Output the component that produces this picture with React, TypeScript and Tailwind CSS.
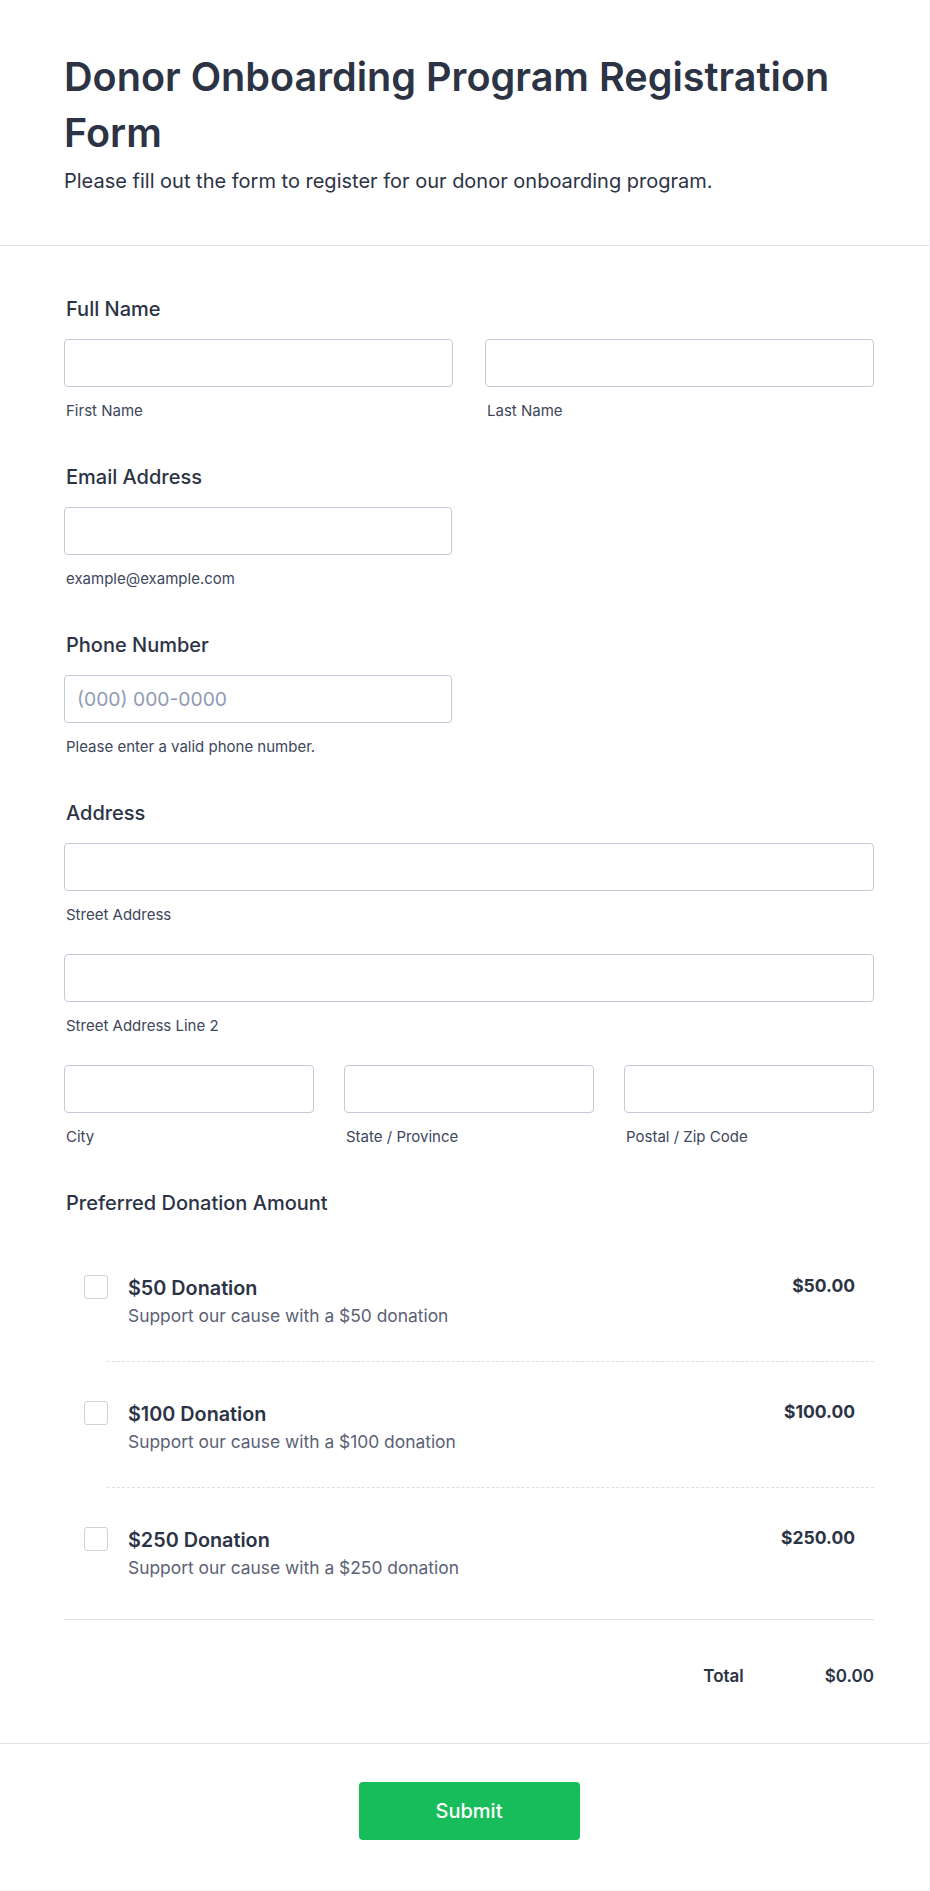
import React from 'react';

const products = [
  { name: '$50 Donation', desc: 'Support our cause with a $50 donation', price: '$50.00' },
  { name: '$100 Donation', desc: 'Support our cause with a $100 donation', price: '$100.00' },
  { name: '$250 Donation', desc: 'Support our cause with a $250 donation', price: '$250.00' },
];

const Label = ({ children }: { children: React.ReactNode }) => (
  <div className="pl-[2px] text-[20px] leading-[28px] font-medium text-[#2c3345]">{children}</div>
);

const SubLabel = ({ children }: { children: React.ReactNode }) => (
  <div className="mt-[14px] pl-[2px] text-[15px] leading-[20px] text-[#3e465b]">{children}</div>
);

const TextInput = ({ placeholder, type = 'text' }: { placeholder?: string; type?: string }) => (
  <input
    type={type}
    placeholder={placeholder}
    className="block h-[48px] w-full rounded-[4px] border border-[#c3cad8] bg-white px-[12px] text-[19.3px] text-[#2c3345] outline-none placeholder:text-[#8f9bb3]"
  />
);

function App() {
  return (
    <div className="min-h-screen bg-white font-['Inter',sans-serif] text-[#2c3345]">
      <div className="border-r border-b border-[#f4f5f9]">
        {/* Header */}
        <header className="border-b border-[#dfe1ea] pl-[64px] pr-[55px] pt-[49px] pb-[50px]">
          <h1 className="text-[39.6px] leading-[56px] font-semibold text-[#2c3345]">
            Donor Onboarding Program Registration Form
          </h1>
          <p className="mt-[6px] text-[20px] leading-[28px] text-[#2c3345]">
            Please fill out the form to register for our donor onboarding program.
          </p>
        </header>

        {/* Fields */}
        <main className="pl-[64px] pr-[55px] pt-[49px] pb-[55px]">
          <section>
            <Label>Full Name</Label>
            <div className="mt-[16px] grid grid-cols-2 gap-[32px]">
              <div>
                <TextInput />
                <SubLabel>First Name</SubLabel>
              </div>
              <div>
                <TextInput />
                <SubLabel>Last Name</SubLabel>
              </div>
            </div>
          </section>

          <section className="mt-[42px]">
            <Label>Email Address</Label>
            <div className="mt-[16px] w-[388px]">
              <TextInput type="email" />
              <SubLabel>example@example.com</SubLabel>
            </div>
          </section>

          <section className="mt-[42px]">
            <Label>Phone Number</Label>
            <div className="mt-[16px] w-[388px]">
              <TextInput type="tel" placeholder="(000) 000-0000" />
              <SubLabel>Please enter a valid phone number.</SubLabel>
            </div>
          </section>

          <section className="mt-[42px]">
            <Label>Address</Label>
            <div className="mt-[16px]">
              <TextInput />
              <SubLabel>Street Address</SubLabel>
            </div>
            <div className="mt-[29px]">
              <TextInput />
              <SubLabel>Street Address Line 2</SubLabel>
            </div>
            <div className="mt-[29px] grid grid-cols-3 gap-[30px]">
              <div>
                <TextInput />
                <SubLabel>City</SubLabel>
              </div>
              <div>
                <TextInput />
                <SubLabel>State / Province</SubLabel>
              </div>
              <div>
                <TextInput />
                <SubLabel>Postal / Zip Code</SubLabel>
              </div>
            </div>
          </section>

          <section className="mt-[42px]">
            <Label>Preferred Donation Amount</Label>
            <div className="mt-[19px]">
              {products.map((p, i) => (
                <div key={p.name}>
                  <div
                    className={
                      i < products.length - 1
                        ? 'flex items-start gap-[20px] pl-[20px] pr-[19px] pt-[38px] pb-[33px]'
                        : 'flex items-start gap-[20px] pl-[20px] pr-[19px] pt-[38px] pb-[39px]'
                    }
                  >
                    <input
                      type="checkbox"
                      className="mt-px h-[24px] w-[24px] shrink-0 appearance-none rounded-[3px] border border-[#cdd1dc] bg-white"
                    />
                    <div className="flex-1">
                      <div className="text-[19.8px] leading-[28px] font-semibold text-[#2c3345]">{p.name}</div>
                      <div className="mt-[2px] text-[17.4px] leading-[24px] text-[#5b6275]">{p.desc}</div>
                    </div>
                    <div className="text-[17.5px] leading-[24px] font-bold text-[#2c3345]">{p.price}</div>
                  </div>
                  {i < products.length - 1 && (
                    <div className="ml-[43px] border-t border-dashed border-[#dcdfe7]" />
                  )}
                </div>
              ))}
            </div>
            <div className="border-t border-[#dfe1ea]" />
            <div className="flex justify-end gap-[81px] pt-[44px] text-[17px] leading-[24px]">
              <span className="font-semibold text-[#2c3345]">Total</span>
              <span className="font-semibold text-[#2c3345]">$0.00</span>
            </div>
          </section>
        </main>

        {/* Footer */}
        <footer className="flex justify-center border-t border-[#dfe1ea] pl-[64px] pr-[55px] pt-[38px] pb-[50px]">
          <button className="h-[58px] w-[221px] rounded-[4px] bg-[#18bd5b] text-[20px] font-medium text-white">
            Submit
          </button>
        </footer>
      </div>
    </div>
  );
}

export default App;
